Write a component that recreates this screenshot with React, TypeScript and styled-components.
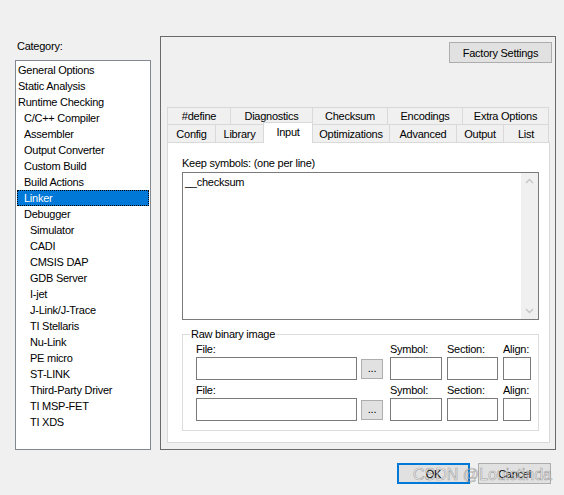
import React from "react";
import styled, { createGlobalStyle } from "styled-components";

const GlobalStyle = createGlobalStyle`
  html, body { margin: 0; padding: 0; background: #f0f0f0; }
  body {
    font: 11px "Liberation Sans", Arial, sans-serif;
    letter-spacing: -0.25px;
    color: #000;
  }
  * { box-sizing: border-box; }
`;

const categories = [
    { name: 'General Options', level: 0 },
    { name: 'Static Analysis', level: 0 },
    { name: 'Runtime Checking', level: 0 },
    { name: 'C/C++ Compiler', level: 1 },
    { name: 'Assembler', level: 1 },
    { name: 'Output Converter', level: 1 },
    { name: 'Custom Build', level: 1 },
    { name: 'Build Actions', level: 1 },
    { name: 'Linker', level: 1, selected: true },
    { name: 'Debugger', level: 1 },
    { name: 'Simulator', level: 2 },
    { name: 'CADI', level: 2 },
    { name: 'CMSIS DAP', level: 2 },
    { name: 'GDB Server', level: 2 },
    { name: 'I-jet', level: 2 },
    { name: 'J-Link/J-Trace', level: 2 },
    { name: 'TI Stellaris', level: 2 },
    { name: 'Nu-Link', level: 2 },
    { name: 'PE micro', level: 2 },
    { name: 'ST-LINK', level: 2 },
    { name: 'Third-Party Driver', level: 2 },
    { name: 'TI MSP-FET', level: 2 },
    { name: 'TI XDS', level: 2 },
]

const backTabs = [
    { label: '#define', w: 64 },
    { label: 'Diagnostics', w: 82 },
    { label: 'Checksum', w: 75 },
    { label: 'Encodings', w: 75 },
    { label: 'Extra Options', w: 86 },
]

const frontTabs = [
    { label: 'Config', w: 49 },
    { label: 'Library', w: 48 },
    { label: 'Input', w: 49, active: true },
    { label: 'Optimizations', w: 77 },
    { label: 'Advanced', w: 67 },
    { label: 'Output', w: 47 },
    { label: 'List', w: 45 },
]

const Chevron = ({ up }: { up?: boolean }) =>
    <svg width="17" height="17" viewBox="0 0 17 17">
        <polyline
            points={up ? "5,10 8.5,6.5 12,10" : "5,7 8.5,10.5 12,7"}
            fill="none" stroke="#c4c4c4" strokeWidth="1.3"
        />
    </svg>

const BinaryRow = () =>
    <Row>
        <Field $w={161}>
            <FieldLabel>File:</FieldLabel>
            <Input/>
        </Field>
        <Browse>...</Browse>
        <Field $w={52} $ml={7}>
            <FieldLabel>Symbol:</FieldLabel>
            <Input/>
        </Field>
        <Field $w={51} $ml={5}>
            <FieldLabel>Section:</FieldLabel>
            <Input/>
        </Field>
        <Field $w={28} $ml={5}>
            <FieldLabel>Align:</FieldLabel>
            <Input/>
        </Field>
    </Row>

const App = () => {

    return <Window>
        <GlobalStyle/>

        <MainRow>
            <LeftCol>
                <CategoryLabel>Category:</CategoryLabel>
                <List>
                    { categories.map(it =>
                        <Item key={it.name} $level={it.level} $selected={!!it.selected}>{it.name}</Item>
                    ) }
                </List>
            </LeftCol>

            <Panel>
                <Toolbar>
                    <Button $w={103}>Factory Settings</Button>
                </Toolbar>

                <TabControl>
                    <TabRow>
                        { backTabs.map(it => <Tab key={it.label} $w={it.w} $h={17}>{it.label}</Tab>) }
                    </TabRow>
                    <TabRow>
                        { frontTabs.map(it =>
                            <Tab key={it.label} $w={it.w} $h={18} $active={!!it.active}>{it.label}</Tab>
                        ) }
                    </TabRow>

                    <Page>
                        <Label>Keep symbols: (one per line)</Label>
                        <TextBox>
                            <TextContent>__checksum</TextContent>
                            <Scrollbar>
                                <Chevron up/>
                                <Chevron/>
                            </Scrollbar>
                        </TextBox>

                        <Group>
                            <Legend>Raw binary image</Legend>
                            <BinaryRow/>
                            <Space h={2}/>
                            <BinaryRow/>
                        </Group>
                    </Page>
                </TabControl>
            </Panel>
        </MainRow>

        <Footer>
            <Button $w={73} $primary>OK</Button>
            <Button $w={73}>Cancel</Button>
        </Footer>

        <Watermark>CSDN @Louistinda</Watermark>
    </Window>
}
export default React.memo(App)


const Window = styled.div`
  position: relative;
  width: 564px; height: 495px;
  overflow: hidden;
  display: flex; flex-direction: column;
`

const MainRow = styled.div`
  display: flex;
  gap: 9px;
  padding: 36px 0 0 15px;
`

const LeftCol = styled.div`
  width: 136px;
  display: flex; flex-direction: column;
`

const CategoryLabel = styled.div`
  line-height: 16px;
  margin: 2px 0 6px 2px;
`

const List = styled.div`
  height: 390px;
  background: #fff;
  border: 1px solid #828790;
  padding-top: 1px;
`

const Item = styled.div<{ $level: number, $selected: boolean }>`
  height: 16px; line-height: 16px;
  margin: 0 1px;
  padding-left: ${p => [1, 7, 13][p.$level]}px;
  white-space: nowrap;
  ${p => p.$selected && `
    background: #0078d7;
    color: #fff;
    outline: 1px dotted #000;
    outline-offset: -1px;
  `}
`

const Panel = styled.div`
  width: 396px; height: 414px;
  border: 1px solid #6a6a6a;
  padding: 5px 5px 6px 6px;
  display: flex; flex-direction: column;
`

const Toolbar = styled.div`
  display: flex; justify-content: flex-end;
  margin-right: -2px;
`

const Button = styled.div<{ $w: number, $primary?: boolean }>`
  width: ${p => p.$w}px; height: 21px;
  display: flex; align-items: center; justify-content: center;
  background: #e1e1e1;
  border: ${p => p.$primary ? '2px solid #0078d7' : '1px solid #adadad'};
  white-space: nowrap;
`

const TabControl = styled.div`
  margin-top: 44px;
  display: flex; flex-direction: column;
`

const TabRow = styled.div`
  display: flex;
`

const Tab = styled.div<{ $w: number, $h: number, $active?: boolean }>`
  width: ${p => p.$w}px; height: ${p => p.$h}px;
  display: flex; align-items: center; justify-content: center;
  border-top: 1px solid #d9d9d9;
  border-right: 1px solid #d9d9d9;
  &:first-child { border-left: 1px solid #d9d9d9; }
  background: #f0f0f0;
  white-space: nowrap;
  ${p => p.$active && `
    height: ${p.$h + 3}px;
    margin: -2px 0 -1px -1px;
    width: ${p.$w + 1}px;
    border-left: 1px solid #d9d9d9;
    background: #fff;
    padding-bottom: 3px;
    z-index: 1;
  `}
`

const Page = styled.div`
  height: 301px;
  background: #fff;
  border: 1px solid #d9d9d9;
  padding: 12px 10px 0 14px;
`

const Label = styled.div`
  line-height: 16px;
  margin-bottom: 1px;
`

const TextBox = styled.div`
  height: 148px;
  border: 1px solid #7a7a7a;
  display: flex;
`

const TextContent = styled.div`
  flex: 1;
  padding: 1px 0 0 2px;
  line-height: 16px;
`

const Scrollbar = styled.div`
  width: 17px;
  background: #f0f0f0;
  display: flex; flex-direction: column; justify-content: space-between;
`

const Group = styled.fieldset`
  margin: 7px 0 0 0;
  border: 1px solid #dcdcdc;
  padding: 0 7px 9px 13px;
  min-width: 0;
`

const Legend = styled.legend`
  line-height: 14px;
  padding: 0 1px;
  margin-left: -6px;
`

const Row = styled.div`
  display: flex; align-items: flex-end;
`

const Field = styled.div<{ $w: number, $ml?: number }>`
  width: ${p => p.$w}px;
  margin-left: ${p => p.$ml || 0}px;
  display: flex; flex-direction: column;
`

const FieldLabel = styled.div`
  line-height: 16px;
  white-space: nowrap;
`

const Input = styled.div`
  height: 23px;
  background: #fff;
  border: 1px solid #7a7a7a;
`

const Browse = styled.div`
  width: 22px; height: 20px;
  margin: 0 0 1px 4px;
  background: #e1e1e1;
  border: 1px solid #adadad;
  display: flex; align-items: center; justify-content: center;
  padding-bottom: 2px;
`

const Space = styled.div<{ h: number }>`
  height: ${p => p.h}px;
  flex-shrink: 0;
`

const Footer = styled.div`
  display: flex; justify-content: flex-end;
  gap: 8px;
  padding: 13px 13px 0 0;
`

const Watermark = styled.div`
  position: absolute;
  left: 413px; top: 466px;
  font: 16px "Liberation Sans", Arial, sans-serif;
  letter-spacing: 0;
  color: rgba(255, 255, 255, 0.55);
  -webkit-text-stroke: 0.6px rgba(90, 90, 90, 0.55);
  pointer-events: none;
`
